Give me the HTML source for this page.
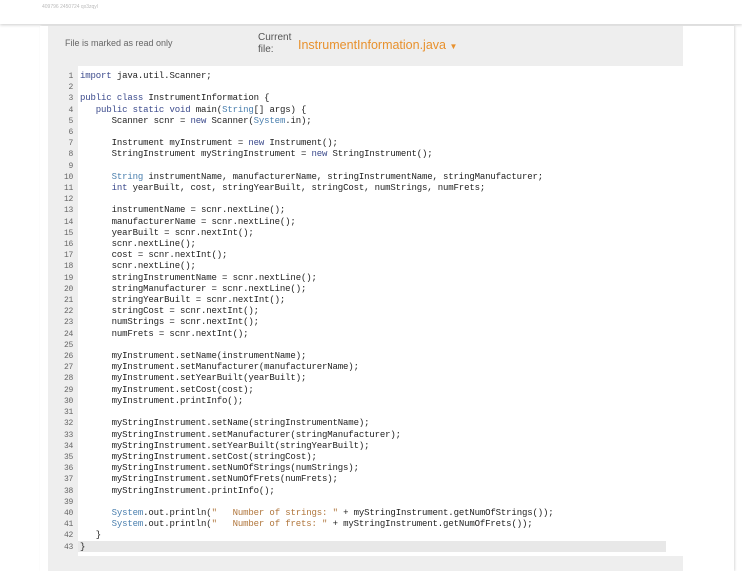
<!DOCTYPE html><html><head><style>
body{margin:0;width:742px;height:567px;background:#fff;position:relative;overflow:hidden;font-family:"Liberation Sans",sans-serif}
.top{position:absolute;left:0;top:0;width:742px;height:24px;background:#fff;box-shadow:0 1px 3px rgba(0,0,0,.2)}
.top span{position:absolute;left:42px;top:4px;font-size:5px;color:#bbb}
.card{position:absolute;left:40px;top:26px;width:694px;height:545px;background:#fff;box-shadow:1px 0 2px rgba(0,0,0,.15)}
.panel{position:absolute;left:48px;top:26px;width:635px;height:545px;background:#eee}
.h1{position:absolute;left:65px;top:38px;font-size:9px;color:#666}
.h2{position:absolute;left:258px;top:32px;font-size:10px;color:#555;line-height:12px}
.h3{position:absolute;left:298px;top:38px;font-size:12.5px;color:#e8912d}
.code{position:absolute;left:78px;top:66px;width:605px;height:490px;background:#fff}
.hl{position:absolute;left:78px;top:541px;width:588px;height:11px;background:#e8e8e8}
pre{position:absolute;margin:0;top:71px;font-family:"Liberation Mono",monospace;font-size:9px;line-height:11.21px;letter-spacing:-0.14px;color:#222}
.ln{left:48px;width:25px;text-align:right;color:#666;font-size:8px;letter-spacing:-0.3px}
.src{left:80px}
.k{color:#3b4a8c}.t{color:#4a7fae}.s{color:#b0763c}
</style></head><body>
<div class="top"><span>409796 2450724 qx3zqyl</span></div>
<div class="card"></div><div class="panel"></div>
<div class="h1">File is marked as read only</div>
<div class="h2">Current<br>file:</div>
<div class="h3">InstrumentInformation.java <span style="font-size:8px">▼</span></div>
<div class="code"></div><div class="hl"></div>
<pre class="ln">1
2
3
4
5
6
7
8
9
10
11
12
13
14
15
16
17
18
19
20
21
22
23
24
25
26
27
28
29
30
31
32
33
34
35
36
37
38
39
40
41
42
43</pre>
<pre class="src"><span class="k">import</span> java.util.Scanner;

<span class="k">public class</span> InstrumentInformation {
   <span class="k">public static void</span> main(<span class="t">String</span>[] args) {
      Scanner scnr = <span class="k">new</span> Scanner(<span class="t">System</span>.in);

      Instrument myInstrument = <span class="k">new</span> Instrument();
      StringInstrument myStringInstrument = <span class="k">new</span> StringInstrument();

      <span class="t">String</span> instrumentName, manufacturerName, stringInstrumentName, stringManufacturer;
      <span class="k">int</span> yearBuilt, cost, stringYearBuilt, stringCost, numStrings, numFrets;

      instrumentName = scnr.nextLine();
      manufacturerName = scnr.nextLine();
      yearBuilt = scnr.nextInt();
      scnr.nextLine();
      cost = scnr.nextInt();
      scnr.nextLine();
      stringInstrumentName = scnr.nextLine();
      stringManufacturer = scnr.nextLine();
      stringYearBuilt = scnr.nextInt();
      stringCost = scnr.nextInt();
      numStrings = scnr.nextInt();
      numFrets = scnr.nextInt();

      myInstrument.setName(instrumentName);
      myInstrument.setManufacturer(manufacturerName);
      myInstrument.setYearBuilt(yearBuilt);
      myInstrument.setCost(cost);
      myInstrument.printInfo();

      myStringInstrument.setName(stringInstrumentName);
      myStringInstrument.setManufacturer(stringManufacturer);
      myStringInstrument.setYearBuilt(stringYearBuilt);
      myStringInstrument.setCost(stringCost);
      myStringInstrument.setNumOfStrings(numStrings);
      myStringInstrument.setNumOfFrets(numFrets);
      myStringInstrument.printInfo();

      <span class="t">System</span>.out.println(<span class="s">"   Number of strings: "</span> + myStringInstrument.getNumOfStrings());
      <span class="t">System</span>.out.println(<span class="s">"   Number of frets: "</span> + myStringInstrument.getNumOfFrets());
   }
}</pre>
</body></html>
